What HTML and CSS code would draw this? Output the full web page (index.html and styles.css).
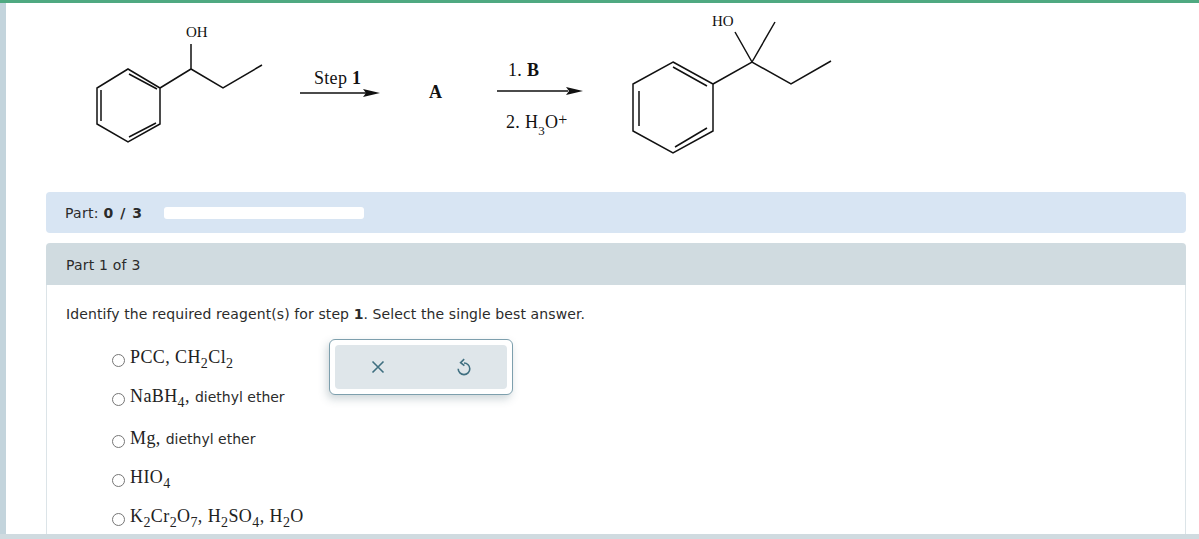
FILE: index.html
```html
<!DOCTYPE html>
<html>
<head>
    <title>Part 1 of 3</title>
    <link rel="stylesheet" href="styles.css">
</head>
<body>
    <div class="top-bar"></div>
    <div class="page">
        <div class="side-bar"></div>
        <main class="content">
            <svg class="scheme" width="1193" height="189" viewBox="6 3 1193 189">
                <g class="bonds">
                    <!-- left molecule -->
                    <path d="M128 69 L160 88 L160 124 L128 142 L97 124 L97 88 Z"/>
                    <path d="M129 74 L157 89 M101 90 L101 121 M129 137 L156 123"/>
                    <path d="M160 88 L191 69 L223 88 L262 65 M191 69 L191 44"/>
                    <!-- right molecule -->
                    <path d="M673 62 L713 84 L713 131 L673 153 L633 131 L633 84 Z"/>
                    <path d="M673 67 L707 86 M639 91 L639 126 M675 147 L707 128"/>
                    <path d="M713 84 L752 62 L791 84 L831 61 M752 62 L735 32 M752 62 L775 22"/>
                    <!-- arrows -->
                    <path d="M300 93 L366 93 M497 91 L568 91"/>
                </g>
                <path class="head" d="M380 93 L363 89 L366 93 L363 97 Z"/>
                <path class="head" d="M583 91 L566 87 L569 91 L566 95 Z"/>
                <text x="186" y="37" class="label-sm">OH</text>
                <text x="712" y="26" class="label-sm">HO</text>
                <text x="314" y="84" class="label">Step <tspan class="b">1</tspan></text>
                <text x="429" y="98" class="label b">A</text>
                <text x="508" y="76" class="label">1. <tspan class="b">B</tspan></text>
                <text x="506" y="128" class="label">2. H<tspan dy="7" class="label-xs">3</tspan><tspan dy="-7">O</tspan><tspan dy="-3" class="label-plus">+</tspan></text>
            </svg>

            <div class="progress-banner">
                <span class="progress-text">Part: <b>0 / 3</b></span>
                <div class="progress-track"></div>
            </div>

            <section class="part-card">
                <div class="part-header">Part 1 of 3</div>
                <div class="part-body">
                    <p class="question">Identify the required reagent(s) for step <b>1</b>. Select the single best answer.</p>
                    <div class="answers">
                        <label class="option"><input type="radio" name="reagent"><span class="chem">PCC, CH<sub>2</sub>Cl<sub>2</sub></span></label>
                        <label class="option option-tall"><input type="radio" name="reagent"><span class="chem">NaBH<sub>4</sub>,</span> <span class="plain">diethyl ether</span></label>
                        <label class="option"><input type="radio" name="reagent"><span class="chem">Mg,</span> <span class="plain">diethyl ether</span></label>
                        <label class="option"><input type="radio" name="reagent"><span class="chem">HIO<sub>4</sub></span></label>
                        <label class="option"><input type="radio" name="reagent"><span class="chem">K<sub>2</sub>Cr<sub>2</sub>O<sub>7</sub>, H<sub>2</sub>SO<sub>4</sub>, H<sub>2</sub>O</span></label>

                        <div class="tool-popup">
                            <div class="tool-inner">
                                <svg width="14" height="14" viewBox="0 0 14 14" class="tool-icon">
                                    <path d="M1.5 1.5 L12.5 12.5 M12.5 1.5 L1.5 12.5"/>
                                </svg>
                                <svg width="16" height="18" viewBox="0 0 16 18" class="tool-icon">
                                    <path d="M8 5 A5.8 5.8 0 1 1 2.2 10.8"/>
                                    <path d="M8.2 1.2 L4.6 4.6 L8.4 7.6"/>
                                </svg>
                            </div>
                        </div>
                    </div>
                </div>
            </section>
        </main>
    </div>
    <div class="bottom-bar"></div>
</body>
</html>
```

FILE: styles.css
```css
* {
    box-sizing: border-box;
    margin: 0;
    padding: 0;
}

html, body {
    height: 100%;
    overflow: hidden;
}

body {
    background: white;
    color: #2b2b2b;
    font-family: 'DejaVu Sans', Verdana, sans-serif;
    font-size: 14px;
}

.top-bar {
    height: 3px;
    background: #4fa981;
}

.page {
    display: flex;
    height: 536px;
}

.side-bar {
    width: 6px;
    background: #c3d4dc;
    flex-shrink: 0;
}

.content {
    flex: 1;
    min-width: 0;
    overflow: hidden;
}

.scheme {
    display: block;
}

.bonds {
    fill: none;
    stroke: #111;
    stroke-width: 1.5;
}

.head {
    fill: #111;
}

.scheme text {
    font-family: 'Liberation Serif', serif;
    fill: #111;
}

.label {
    font-size: 18px;
    letter-spacing: 0.3px;
}

.label-sm {
    font-size: 15px;
}

.label-xs {
    font-size: 13px;
}

.label-plus {
    font-size: 16px;
}

.b {
    font-weight: bold;
}

.progress-banner {
    display: flex;
    align-items: center;
    gap: 20px;
    width: 1140px;
    height: 41px;
    margin-left: 40px;
    padding-left: 19px;
    background: #d8e5f3;
    border-radius: 4px;
}

.progress-text {
    width: 79px;
    white-space: nowrap;
    letter-spacing: 0.3px;
}

.progress-text b {
    letter-spacing: 1px;
}

.progress-track {
    width: 200px;
    height: 12px;
    background: white;
    border-radius: 3px;
}

.part-card {
    width: 1140px;
    margin: 10px 0 0 40px;
}

.part-header {
    height: 42px;
    padding: 14px 20px 0;
    background: #d0dbe0;
    border-radius: 4px 4px 0 0;
    letter-spacing: 0.2px;
}

.part-body {
    padding: 21px 20px 0;
    border: 1px solid #dce4e8;
    border-top: none;
    background: white;
}

.question {
    line-height: 17px;
    margin-bottom: 19px;
    margin-left: -1px;
    letter-spacing: 0.1px;
}

.answers {
    position: relative;
}

.option {
    display: flex;
    align-items: baseline;
    gap: 5px;
    height: 39px;
    padding-left: 45px;
    line-height: 30px;
}

.option-tall {
    height: 42px;
}

.option input {
    width: 13px;
    height: 13px;
    margin: 0;
    flex-shrink: 0;
    position: relative;
    top: 4px;
}

.chem {
    font-family: 'Liberation Serif', serif;
    font-size: 18px;
    letter-spacing: 0.4px;
    color: #222;
}

.chem sub {
    font-size: 14px;
    line-height: 0;
}

.tool-popup {
    position: absolute;
    left: 262px;
    top: -3px;
    width: 184px;
    height: 56px;
    padding: 5px;
    background: white;
    border: 1px solid #7d9fad;
    border-radius: 6px;
    box-shadow: -2px 4px 8px rgba(60, 90, 105, 0.25);
}

.tool-inner {
    display: flex;
    justify-content: space-around;
    align-items: center;
    height: 100%;
    background: #dfe6ea;
    border-radius: 4px;
}

.tool-icon {
    fill: none;
    stroke: #3f6f80;
    stroke-width: 1.6;
}

.bottom-bar {
    position: fixed;
    left: 0;
    right: 0;
    bottom: 0;
    height: 5px;
    background: #d0dbe0;
}
```
